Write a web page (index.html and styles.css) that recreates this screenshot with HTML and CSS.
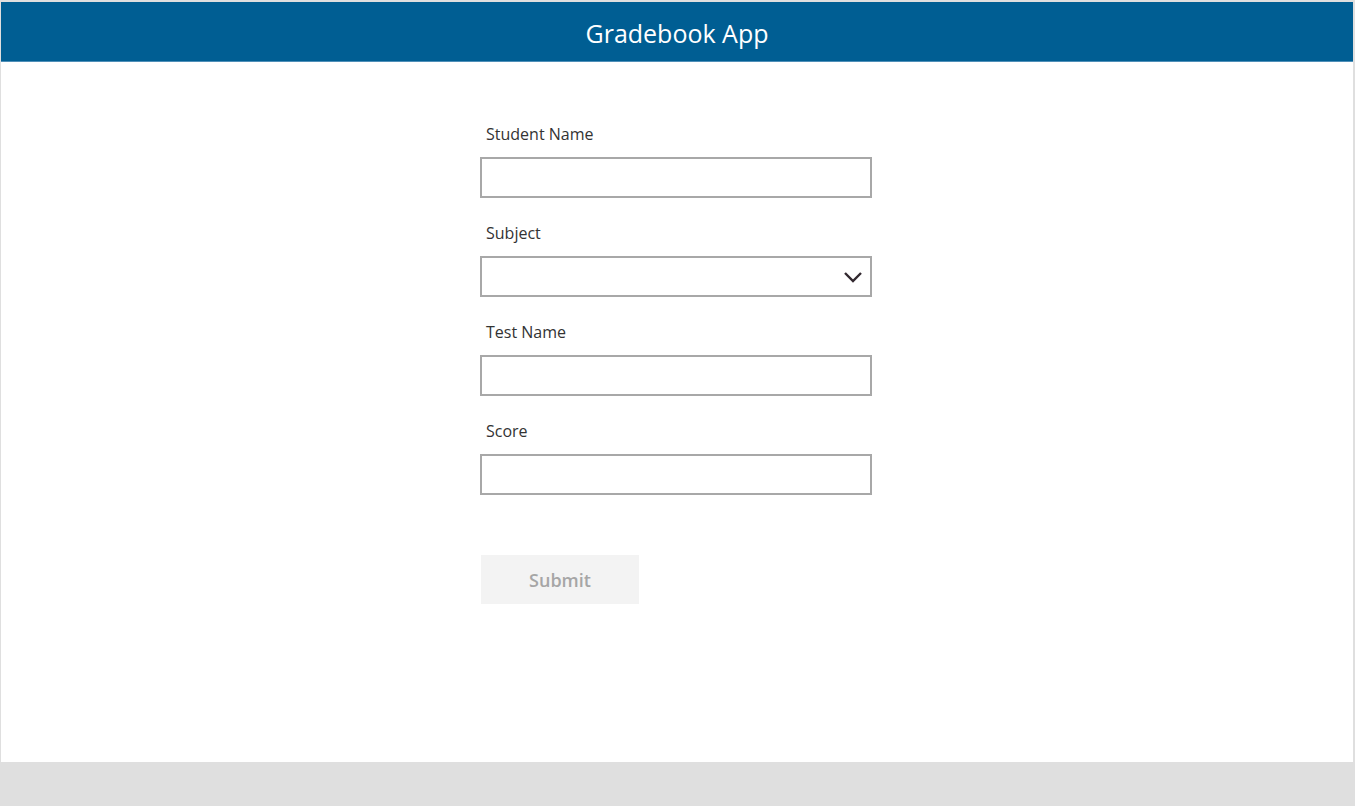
FILE: index.html
```html
<!DOCTYPE html>
<html lang="en">
<head>
<meta charset="utf-8">
<title>Gradebook App</title>
<link rel="stylesheet" href="styles.css">
</head>
<body>
<div class="app">
  <header class="header">Gradebook App</header>
  <main class="form">
    <div class="field">
      <label class="label">Student Name</label>
      <input class="input" type="text">
    </div>
    <div class="field">
      <label class="label">Subject</label>
      <div class="select">
        <svg class="chevron" width="20" height="12" viewBox="0 0 20 12"><polyline points="2,2 10,10 18,2" fill="none" stroke="#32282f" stroke-width="2.4"/></svg>
      </div>
    </div>
    <div class="field">
      <label class="label">Test Name</label>
      <input class="input" type="text">
    </div>
    <div class="field">
      <label class="label">Score</label>
      <input class="input" type="text">
    </div>
    <button class="submit" disabled>Submit</button>
  </main>
</div>
</body>
</html>
```
FILE: styles.css
```css
html, body {
  margin: 0;
  padding: 0;
}
body {
  background: #dfdfdf;
  font-family: "Open Sans", "Noto Sans", sans-serif;
}
.app {
  margin: 2px 2px 0 1px;
  height: 760px;
  background: #ffffff;
  display: flex;
  flex-direction: column;
}
.header {
  box-sizing: border-box;
  height: 60px;
  background: #005e93;
  border-bottom: 1px solid #4f8fb8;
  color: #ffffff;
  font-size: 25px;
  display: flex;
  align-items: center;
  justify-content: center;
  padding-top: 2px;
}
.form {
  width: 392px;
  margin: 0 auto;
  padding-top: 61px;
  display: flex;
  flex-direction: column;
  transform: translateX(-1px);
}
.field {
  display: flex;
  flex-direction: column;
  margin-bottom: 24px;
}
.label {
  height: 22px;
  line-height: 22px;
  margin-bottom: 12px;
  padding-left: 6px;
  font-size: 16px;
  color: #333333;
}
.input, .select {
  box-sizing: border-box;
  height: 41px;
  width: 392px;
  border: 2px solid #a8a8a8;
  background: #fff;
  margin: 0;
  padding: 0 10px;
  font: inherit;
}
.select {
  display: flex;
  align-items: center;
  justify-content: flex-end;
  padding-right: 7px;
}
.chevron {
  display: block;
}
.submit {
  margin-top: 36px;
  margin-left: 1px;
  width: 158px;
  height: 49px;
  border: none;
  background: #f3f3f3;
  color: #a6a6a6;
  font-family: inherit;
  font-size: 18px;
  font-weight: 600;
  padding: 0;
}
```
